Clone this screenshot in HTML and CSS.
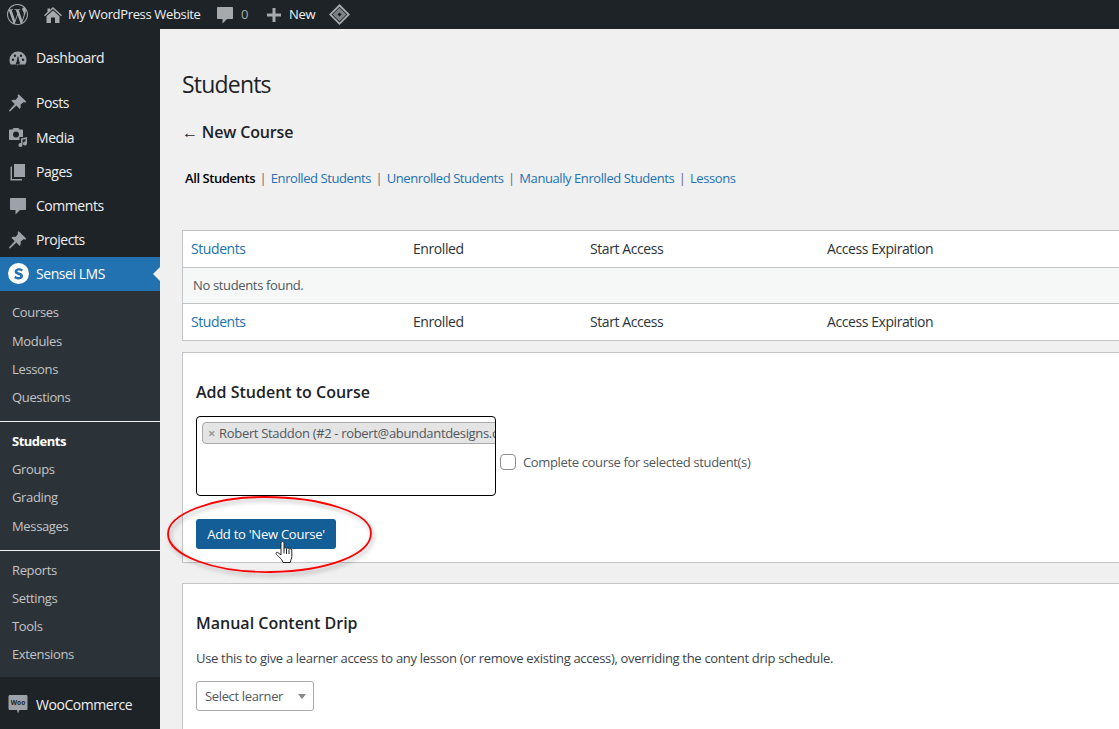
FILE: index.html
```html
<!DOCTYPE html>
<html lang="en">
<head>
  <meta charset="UTF-8">
  <title>Students</title>
  <link rel="stylesheet" href="styles.css">
</head>
<body>
  <svg class="defs" width="0" height="0">
    <symbol id="i-pin" viewBox="0 0 20 20"><path d="M10.4 1.2c1.9 1.3 5.2 4.6 7.9 7.6l-1.2.9c-.7-.4-1.4-.5-2-.2l-2.6 2.3c.5 1.500.3 3-.8 4.200l-3.300-3.400L2 18.400l-.8-.2-.2-.8 5.700-6.400-3.400-3.300c1.200-1.100 2.700-1.300 4.200-.8l2.300-2.600c.3-.6.200-1.300-.200-2z"/></symbol>
    <symbol id="i-comment" viewBox="0 0 20 20"><path d="M3 2h14c.6 0 1 .4 1 1v10c0 .6-.4 1-1 1h-5l-4.500 4.500V14H3c-.6 0-1-.4-1-1V3c0-.6.4-1 1-1z"/></symbol>
  </svg>

  <header class="adminbar">
    <a class="bar-item bar-wp"><svg viewBox="0 0 24 24" width="20" height="20"><path d="M21.469 6.825c.84 1.537 1.318 3.3 1.318 5.175 0 3.979-2.156 7.456-5.363 9.325l3.295-9.527c.615-1.54.82-2.771.82-3.864 0-.405-.026-.78-.07-1.11m-7.981.105c.647-.03 1.232-.105 1.232-.105.582-.075.514-.93-.067-.899 0 0-1.755.135-2.88.135-1.064 0-2.85-.15-2.85-.15-.585-.03-.661.855-.075.885 0 0 .54.061 1.125.09l1.68 4.605-2.37 7.08L5.354 6.9c.649-.03 1.234-.1 1.234-.1.585-.075.516-.93-.065-.896 0 0-1.746.138-2.874.138-.2 0-.438-.008-.69-.015C4.911 3.15 8.235 1.215 12 1.215c2.809 0 5.365 1.072 7.286 2.833-.046-.003-.091-.009-.141-.009-1.06 0-1.812.923-1.812 1.914 0 .89.513 1.643 1.06 2.531.411.72.89 1.643.89 2.977 0 .915-.354 1.994-.821 3.479l-1.075 3.585-3.9-11.61.001.014zM12 22.784c-1.059 0-2.081-.153-3.048-.437l3.237-9.406 3.315 9.087c.024.053.05.101.078.149-1.12.393-2.325.609-3.582.609M1.211 12c0-1.564.336-3.05.935-4.39L7.29 21.709C3.694 19.96 1.212 16.271 1.211 12M12 0C5.385 0 0 5.385 0 12s5.385 12 12 12 12-5.385 12-12S18.615 0 12 0"/></svg></a>
    <a class="bar-item bar-home"><svg viewBox="0 0 20 20" width="20" height="20"><path d="M10 2 19 10.200l-1 1L10 4 2 11.200l-1-1L4.500 7V3.500H7v1.200z"/><path d="M10 5.500 16.500 11.300V18H12v-5.500H8V18H3.500v-6.700z"/></svg><span>My WordPress Website</span></a>
    <a class="bar-item bar-comments"><svg width="20" height="20"><use href="#i-comment"/></svg><span class="muted">0</span></a>
    <a class="bar-item bar-new"><svg viewBox="0 0 20 20" width="20" height="20"><path d="M8.500 3h3v5.500H17v3h-5.500V17h-3v-5.500H3v-3h5.500z"/></svg><span>New</span></a>
    <a class="bar-item bar-diamond"><svg viewBox="0 0 20 20" width="20" height="20"><path d="M10 0 20 10 10 20 0 10z"/><path class="cut" d="M10 2.500 17.500 10 10 17.500 2.500 10z"/><path class="mid" d="M10 3.500 16.500 10 10 16.500 3.500 10z"/><path class="cut" d="M10 8 12 10 10 12 8 10z"/></svg></a>
  </header>

  <div class="layout">
    <nav class="sidebar">
      <ul class="menu menu-first">
        <li><svg viewBox="0 0 20 20"><path d="M10 3.500a8.500 8.500 0 0 0-8.500 8.500c0 1.700.5 3.300 1.300 4.500h14.400c.8-1.200 1.300-2.800 1.300-4.500A8.500 8.500 0 0 0 10 3.500zM5 13a1.200 1.200 0 1 1 0-2.400A1.200 1.200 0 0 1 5 13zm2-4a1.200 1.200 0 1 1 0-2.400A1.200 1.200 0 0 1 7 9zm4.200 6.500a1.700 1.700 0 1 1-2.600-1.400l1-5.600h.8l1 5.600c.5.300.8.800.8 1.400zM13 9a1.200 1.200 0 1 1 0-2.400A1.200 1.200 0 0 1 13 9zm2 4a1.200 1.200 0 1 1 0-2.400 1.200 1.200 0 0 1 0 2.400z"/></svg>Dashboard</li>
      </ul>
      <ul class="menu menu-second">
        <li><svg><use href="#i-pin"/></svg>Posts</li>
        <li><svg viewBox="0 0 20 20"><path d="M2 2.500h2.500l1-1.500h5l1 1.500H14c.6 0 1 .4 1 1V10h-3.500v3H2c-.6 0-1-.4-1-1V3.500c0-.6.4-1 1-1zm6 2a3 3 0 1 0 0 6 3 3 0 0 0 0-6zM13 11.500l6-1.500v6.500a2 2 0 1 1-1.500-1.900V12l-3 .8v5.200a2 2 0 1 1-1.500-1.900z"/></svg>Media</li>
        <li><svg viewBox="0 0 20 20"><path d="M6 2h11v13H6z"/><path d="M4 4.500v12.500h10v1.500H2.500V4.500z"/></svg>Pages</li>
        <li><svg><use href="#i-comment"/></svg>Comments</li>
        <li><svg><use href="#i-pin"/></svg>Projects</li>
        <li class="current"><svg class="sensei" viewBox="0 0 22 22"><circle cx="11" cy="11" r="11" fill="#fff"/><path fill="#2271b1" d="M15.500 6.600 14.700 9c-1-.7-2.300-1.100-3.400-1.100-1 0-1.500.3-1.500.8 0 .6.700.8 2 1.200 2.200.6 3.900 1.400 3.900 3.600 0 2.300-1.900 3.700-4.500 3.700-1.700 0-3.500-.6-4.700-1.600l1-2.300c1 .8 2.500 1.400 3.700 1.400 1.100 0 1.600-.3 1.600-.9s-.8-.9-2.200-1.300c-2-.6-3.700-1.300-3.700-3.500 0-2.200 1.800-3.600 4.400-3.600 1.600 0 3.200.4 4.200 1.200z"/></svg>Sensei LMS</li>
      </ul>
      <div class="submenu">
        <ul class="subgroup">
          <li>Courses</li>
          <li>Modules</li>
          <li>Lessons</li>
          <li>Questions</li>
        </ul>
        <ul class="subgroup">
          <li class="on">Students</li>
          <li>Groups</li>
          <li>Grading</li>
          <li>Messages</li>
        </ul>
        <ul class="subgroup">
          <li>Reports</li>
          <li>Settings</li>
          <li>Tools</li>
          <li>Extensions</li>
        </ul>
      </div>
      <ul class="menu menu-woo">
        <li><svg class="woo" viewBox="0 0 20 20"><path d="M2 1h16c1 0 1.500.6 1.500 1.500v12c0 1-.5 1.500-1.500 1.500h-6.500L10 19.500 9 16H2c-1 0-1.500-.5-1.500-1.500v-12C.5 1.600 1 1 2 1z"/><text x="10" y="11" text-anchor="middle">Woo</text></svg>WooCommerce</li>
      </ul>
    </nav>

    <main class="content">
      <h1>Students</h1>
      <h2 class="back">&larr; New Course</h2>
      <ul class="tabs">
        <li class="active">All Students</li>
        <li><a>Enrolled Students</a></li>
        <li><a>Unenrolled Students</a></li>
        <li><a>Manually Enrolled Students</a></li>
        <li><a>Lessons</a></li>
      </ul>

      <table class="list">
        <thead>
          <tr><th class="c1"><a>Students</a></th><th class="c2">Enrolled</th><th class="c3">Start Access</th><th>Access Expiration</th></tr>
        </thead>
        <tbody>
          <tr><td colspan="4">No students found.</td></tr>
        </tbody>
        <tfoot>
          <tr><th><a>Students</a></th><th>Enrolled</th><th>Start Access</th><th>Access Expiration</th></tr>
        </tfoot>
      </table>

      <section class="box box-add">
        <h3>Add Student to Course</h3>
        <div class="add-row">
          <div class="picker"><span class="chip"><i>&times;</i>Robert Staddon (#2 - robert@abundantdesigns.com)</span></div>
          <label class="check"><span class="checkbox"></span>Complete course for selected student(s)</label>
        </div>
        <button class="btn">Add to 'New Course'</button>
        <svg class="ring" viewBox="0 0 210 82" width="210" height="82">
          <path d="M4 39C4 19 48 2 100 2c58 0 107 16 107 36 0 22-44 38-100 39C50 78 4 60 4 39z"/>
        </svg>
        <svg class="hand" viewBox="0 0 19 25" width="19" height="25">
          <path d="M7.500 1.500c1 0 1.500.7 1.500 1.700V8.500c.4-1 2.300-1 2.500.2.400-.9 2.200-.8 2.500.4.500-.7 2.800-.5 2.800.9v6.500c0 2-1.300 3.500-1.500 6H8c-.5-2-2-3.500-3.500-5.300C3.300 16.300 1 14.700 1 13.500c0-1.200 1.400-1.500 2.300-.7L6 15V3.200c0-1 .5-1.700 1.500-1.700z"/>
          <path d="M9 8.500v5M11.500 9v5M14 9.500v4.500"/>
        </svg>
      </section>

      <section class="box box-drip">
        <h3>Manual Content Drip</h3>
        <p>Use this to give a learner access to any lesson (or remove existing access), overriding the content drip schedule.</p>
        <div class="select">Select learner<span class="caret"></span></div>
      </section>
    </main>
  </div>
</body>
</html>
```

FILE: styles.css
```css
html, body { height: 100%; margin: 0; padding: 0; overflow: hidden; }
body { background: #f0f0f1; color: #3c434a; font: 13px/1.4 "Open Sans", "Noto Sans", sans-serif; width: 1119px; }
ul { list-style: none; margin: 0; padding: 0; }
a { color: #2271b1; }
.defs { position: absolute; }

.adminbar { display: flex; align-items: center; height: 29px; background: #1d2327; color: #f0f0f1; letter-spacing: -0.35px; }
.adminbar svg { fill: #a7aaad; display: block; }
.bar-item { display: flex; align-items: center; color: #f0f0f1; }
.bar-wp { padding-left: 7px; width: 36px; box-sizing: content-box; }
.bar-wp svg { width: 21px; height: 21px; }
.bar-home svg { margin-right: 5px; }
.bar-home { width: 172px; }
.bar-comments svg { margin-right: 6px; }
.bar-comments { width: 49px; }
.muted { color: #a7aaad; }
.bar-new svg { margin-right: 5px; }
.bar-new { width: 65px; }
.adminbar .mid { fill: #7d8287; }
.adminbar .cut { fill: #1d2327; }
.bar-diamond svg { width: 21px; height: 21px; }

.layout { display: flex; align-items: flex-start; height: 700px; }

.sidebar { width: 160px; flex: none; height: 700px; background: #1d2327; color: #f0f0f1; font-size: 14px; letter-spacing: -0.45px; }
.menu li { display: flex; align-items: center; height: 34.2px; padding-left: 36px; position: relative; }
.menu li svg { position: absolute; left: 8px; top: 7px; width: 20px; height: 20px; fill: #9ca2a7; }
.menu-first { padding-top: 12px; }
.menu-second { padding-top: 11px; }
.menu li.current { background: #2271b1; color: #fff; }
.menu li.current::after { content: ""; position: absolute; right: 0; top: 10px; border: 7px solid transparent; border-right-color: #f0f0f1; border-left: 0; }
.menu li svg.sensei { left: 8px; top: 6px; width: 21px; height: 21px; }
.submenu { background: #2c3338; color: #c3c4c7; font-size: 13px; letter-spacing: -0.35px; padding-top: 7px; }
.subgroup { padding-bottom: 10px; }
.subgroup + .subgroup { border-top: 1px solid #f0f0f1; padding-top: 5px; }
.subgroup:last-child { padding-bottom: 8.500px; }
.subgroup li { display: flex; align-items: center; height: 28.2px; padding-left: 12px; }
.subgroup li.on { color: #fff; font-weight: 700; letter-spacing: -0.5px; }
.menu-woo { padding-top: 11px; }
.menu-woo li svg.woo { top: 6px; width: 20px; height: 20px; }
.woo text { fill: #1d2327; font: 700 6.500px "Open Sans", sans-serif; letter-spacing: 0; }

.content { flex: none; width: 1000px; padding: 0 0 0 22px; margin-left: 0; }
.content h1 { margin: 0; padding-top: 40px; font-size: 23px; line-height: 30px; font-weight: 400; color: #1d2327; letter-spacing: -0.8px; }
.back { margin: 21px 0 0; font-size: 16px; line-height: 24px; font-weight: 600; color: #1d2327; letter-spacing: -0.15px; }

.tabs { display: flex; margin: 24px 0 0 3px; line-height: 20px; letter-spacing: -0.42px; color: #50575e; }
.tabs li + li::before { content: "|"; color: #646970; padding: 0 4.500px; }
.tabs .active { color: #000; font-weight: 600; }

.list { width: 1000px; margin-top: 42px; border: 1px solid #c3c4c7; border-spacing: 0; border-collapse: separate; background: #fff; table-layout: fixed; font-size: 14px; letter-spacing: -0.42px; }
.list th { padding: 0 8px; height: 36px; text-align: left; font-weight: 400; color: #2c3338; }
.list thead th { border-bottom: 1px solid #c3c4c7; }
.list tfoot th { border-top: 1px solid #c3c4c7; }
.list td { padding: 0 10px; height: 35px; background: #f6f7f7; color: #50575e; font-size: 13px; letter-spacing: -0.35px; }
.c1 { width: 206px; }
.c2 { width: 161px; }
.c3 { width: 221px; }

.box { position: relative; width: 1000px; box-sizing: border-box; border: 1px solid #c3c4c7; background: #fff; padding: 0 13px; }
.box h3 { margin: 0; font-size: 16px; line-height: 22px; font-weight: 600; color: #1d2327; }
.box-add { margin-top: 11px; height: 211px; padding-top: 28px; }
.box-drip { margin-top: 20px; height: 200px; padding-top: 28px; }

.add-row { display: flex; align-items: center; margin-top: 13px; }
.picker { width: 300px; height: 80px; box-sizing: border-box; border: 1px solid #000; border-radius: 4px; padding: 5px; overflow: hidden; white-space: nowrap; letter-spacing: -0.33px; }
.chip { display: inline-block; height: 20px; line-height: 20px; border: 1px solid #aaa; border-radius: 4px; background: #e4e4e4; padding: 0 5px; color: #50575e; }
.chip i { font-style: normal; color: #999; font-weight: 700; margin-right: 4px; }
.check { display: flex; align-items: center; margin: 12px 0 0 4px; letter-spacing: -0.35px; color: #50575e; }
.checkbox { width: 14px; height: 14px; border: 1px solid #8c8f94; border-radius: 4px; background: #fff; margin-right: 7px; }
.btn { display: block; width: 140px; height: 30px; margin-top: 23px; padding: 0; border: 0; border-radius: 3px; background: #135e96; color: #fff; font: inherit; letter-spacing: -0.25px; }
.ring { position: absolute; left: -19px; top: 142px; overflow: visible; filter: drop-shadow(2px 3px 2px rgba(0, 0, 0, .3)); }
.ring path { fill: none; stroke: #f00; stroke-width: 1.800; }
.hand { position: absolute; left: 92px; top: 187px; }
.hand path { fill: #fff; stroke: #222; stroke-width: 1; }

.box-drip p { margin: 14px 0 0; line-height: 20px; color: #3c434a; letter-spacing: -0.31px; }
.select { position: relative; width: 118px; height: 30px; box-sizing: border-box; margin-top: 13px; padding-left: 8px; line-height: 28px; border: 1px solid #a7aaad; border-radius: 3px; color: #50575e; letter-spacing: -0.35px; }
.caret { position: absolute; right: 7px; top: 12px; border: 4px solid transparent; border-top: 5px solid #888; border-bottom: 0; }
```
